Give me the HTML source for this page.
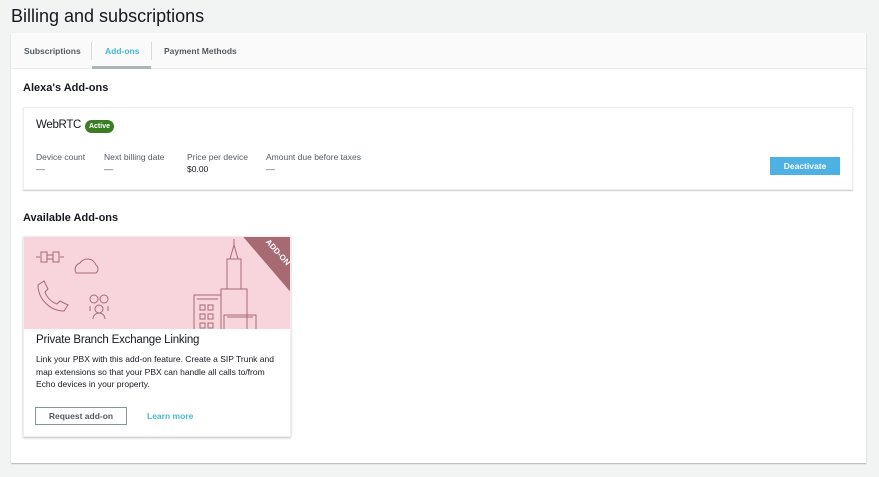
<!DOCTYPE html>
<html><head><style>
*{margin:0;padding:0;box-sizing:border-box}
body{width:879px;height:477px;background:#f2f3f3;font-family:"Liberation Sans",sans-serif;color:#16191f;position:relative;overflow:hidden}
.a{position:absolute;white-space:nowrap}
</style></head><body>
<div class="a" style="left:11px;top:6px;font-size:18px;color:#16191f">Billing and subscriptions</div>
<div class="a" style="left:11px;top:33px;width:855px;height:430px;background:#fff;box-shadow:0 1px 1px rgba(0,0,0,.25)"></div>
<div class="a" style="left:11px;top:33px;width:855px;height:36px;background:#fafafa;border-bottom:1px solid #eaeded"></div>
<div class="a" style="left:24px;top:46px;font-size:8.5px;font-weight:bold;color:#545b64">Subscriptions</div>
<div class="a" style="left:91px;top:42px;width:1px;height:18px;background:#d5dbdb"></div>
<div class="a" style="left:105px;top:46px;font-size:8.5px;font-weight:bold;color:#44b9d6">Add-ons</div>
<div class="a" style="left:92px;top:66px;width:59px;height:3px;background:#aab7b8"></div>
<div class="a" style="left:151px;top:42px;width:1px;height:18px;background:#d5dbdb"></div>
<div class="a" style="left:164px;top:46px;font-size:8.5px;font-weight:bold;color:#545b64">Payment Methods</div>
<div class="a" style="left:23px;top:82px;font-size:11px;font-weight:bold">Alexa's Add-ons</div>
<div class="a" style="left:23px;top:107px;width:830px;height:83px;background:#fff;border:1px solid #eee;box-shadow:0 1px 1px rgba(0,0,0,.2)"></div>
<div class="a" style="left:36px;top:119px;font-size:11.5px;letter-spacing:-0.3px">WebRTC</div>
<div class="a" style="left:85px;top:120px;width:29px;height:13px;border-radius:7px;background:#3b7d23;color:#fff;font-size:7px;font-weight:bold;text-align:center;line-height:13px">Active</div>
<div class="a" style="left:36px;top:152px;font-size:8.5px;color:#545b64">Device count</div>
<div class="a" style="left:36px;top:164px;font-size:9px;color:#545b64">—</div>
<div class="a" style="left:104px;top:152px;font-size:8.5px;color:#545b64">Next billing date</div>
<div class="a" style="left:104px;top:164px;font-size:9px;color:#545b64">—</div>
<div class="a" style="left:187px;top:152px;font-size:8.5px;color:#545b64">Price per device</div>
<div class="a" style="left:187px;top:164px;font-size:8.5px">$0.00</div>
<div class="a" style="left:266px;top:152px;font-size:8.5px;color:#545b64">Amount due before taxes</div>
<div class="a" style="left:266px;top:164px;font-size:9px;color:#545b64">—</div>
<div class="a" style="left:770px;top:157px;width:70px;height:18px;background:#4db1e2;color:#fff;font-size:8.5px;font-weight:bold;text-align:center;line-height:18px">Deactivate</div>
<div class="a" style="left:23px;top:212px;font-size:11px;font-weight:bold">Available Add-ons</div>
<div class="a" style="left:23px;top:236px;width:268px;height:201px;background:#fff;border:1px solid #eee;box-shadow:0 1px 2px rgba(0,0,0,.25);overflow:hidden">
<div style="position:absolute;left:0;top:0;width:268px;height:92px;background:#f8d5dc"></div>
<svg style="position:absolute;left:0;top:0" width="268" height="92" fill="none" stroke="#a66a72" stroke-width="1">
<polygon points="220,0 268,0 268,56" fill="#a66a72"/>
<text x="252" y="17" transform="rotate(48 252 17)" fill="#fff" stroke="none" font-size="8" font-weight="bold" text-anchor="middle" font-family="Liberation Sans">ADD-ON</text>
<path d="M12 20h4M36 20h4M17 15h6v10h-6zM29 15h6v10h-6zM23 18h6M23 22h6"/>
<path d="M52 36a7 7 0 0 1 4-10 9 9 0 0 1 16 2 5 5 0 0 1 0 8z"/>
<path d="M14 48l6-4 4 8-3 3a20 20 0 0 0 12 12l3-3 8 4-4 6c-14 0-26-12-26-26z"/>
<circle cx="70" cy="62" r="4"/><circle cx="80" cy="62" r="4"/><circle cx="75" cy="72" r="4"/><path d="M66 74v-5M84 74v-5M69 82a6 6 0 0 1 12 0"/>
<path d="M197 92V52h26v40M170 92V58h27M173 62h21M176 68h5v5h-5zM184 68h5v5h-5zM176 77h5v5h-5zM184 77h5v5h-5zM176 86h5v5h-5zM184 86h5v5h-5zM203 52V22h14v30M206 22l4-14 4 14M210 8V2M200 92v-14h32v14M203 80h26"/>
</svg>
<div style="position:absolute;left:12px;top:97px;font-size:11.5px;letter-spacing:-0.2px">Private Branch Exchange Linking</div>
<div style="position:absolute;left:12px;top:116px;font-size:8.5px;line-height:12.5px;color:#16191f;white-space:normal;width:250px">Link your PBX with this add-on feature. Create a SIP Trunk and map extensions so that your PBX can handle all calls to/from Echo devices in your property.</div>
<div style="position:absolute;left:11px;top:170px;width:92px;height:18px;border:1px solid #879596;font-size:8.5px;font-weight:bold;text-align:center;line-height:16px;color:#545b64">Request add-on</div>
<div style="position:absolute;left:123px;top:174px;font-size:8.5px;font-weight:bold;color:#44b9d6">Learn more</div>
</div>
</body></html>
